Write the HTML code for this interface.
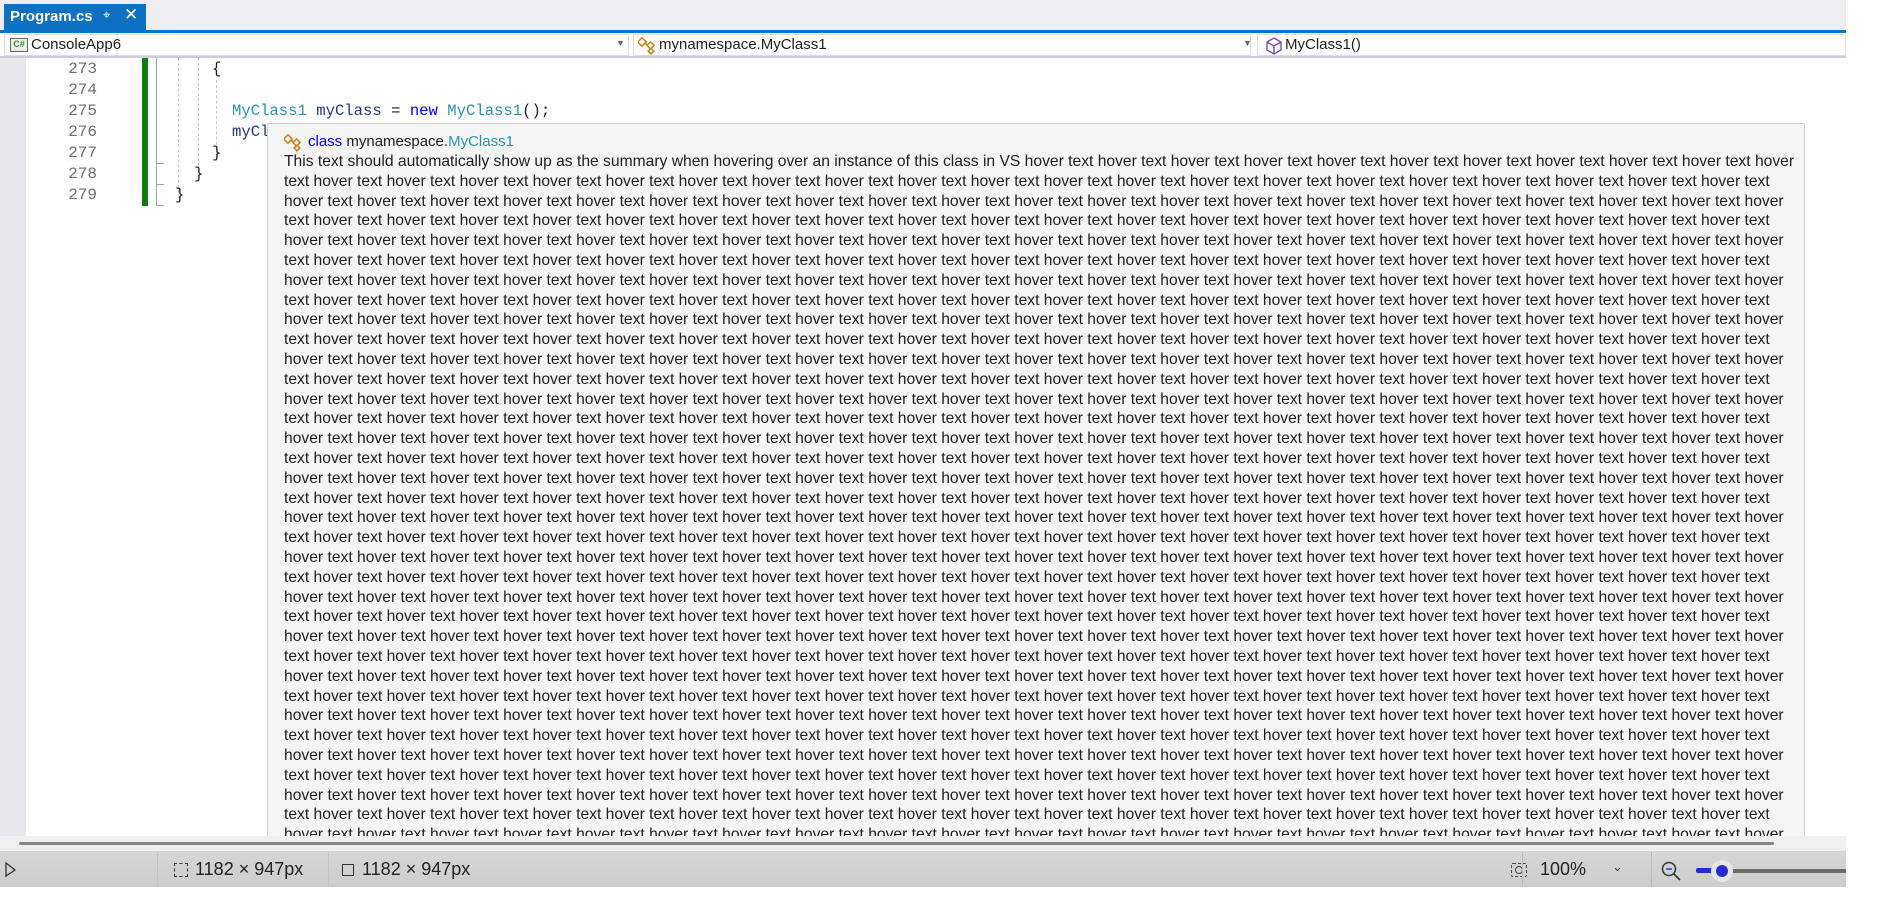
<!DOCTYPE html>
<html><head><meta charset="utf-8"><style>
*{margin:0;padding:0;box-sizing:border-box}
body{width:1878px;height:916px;background:#fff;position:relative;overflow:hidden;font-family:"Liberation Sans",sans-serif}
.abs{position:absolute}
.mono{font-family:"Liberation Mono",monospace;font-size:15.6px;white-space:pre}
.ln{position:absolute;right:1781px;width:60px;text-align:right;color:#6e6e6e;font-family:"Liberation Mono",monospace;font-size:16px}
.tip{position:absolute;left:267px;top:123px;width:1538px;height:715px;background:#f5f5f5;border:1px solid #cfcfd8;border-radius:2px;overflow:hidden}
.tip p{position:absolute;left:16px;top:28px;width:1525px;font-size:15.65px;line-height:19.8px;color:#1e1e1e}
.sb{font-size:18px;color:#222}
.sep{position:absolute;top:852px;width:1px;height:34px;background:#c4c4c4}
</style></head><body>
<div class="abs" style="left:0;top:0;width:1846px;height:31px;background:#eeeef2"></div>
<div class="abs" style="left:4px;top:4px;width:142px;height:27px;background:#0e70c0"></div>
<div class="abs" style="left:10px;top:8px;color:#fff;font-weight:bold;font-size:15px">Program.cs</div>
<div class="abs" style="left:103px;top:7px;color:#fff;font-size:13px">&#x2316;</div>
<div class="abs" style="left:124px;top:5px;color:#fff;font-size:17px">✕</div>
<div class="abs" style="left:0;top:30px;width:1846px;height:3px;background:#0e70c0"></div>
<div class="abs" style="left:0;top:33px;width:1846px;height:25px;background:#fff;border-bottom:2px solid #ccccda"></div>
<div class="abs" style="left:4px;top:34px;width:625px;height:22px;border:1px solid #ddd"></div>
<div class="abs" style="left:633px;top:34px;width:618px;height:22px;border:1px solid #ddd"></div>
<div class="abs" style="left:1257px;top:34px;width:589px;height:22px;border:1px solid #ddd"></div>
<div class="abs" style="left:10px;top:38px;width:18px;height:14px;border:1.5px solid #666;background:#eee;font-size:9px;font-weight:bold;color:#2a9a2a;line-height:11px;text-align:center">C#</div>
<div class="abs" style="left:31px;top:36px;font-size:15px;color:#1e1e1e">ConsoleApp6</div>
<div class="abs" style="left:616px;top:38px;font-size:9px;color:#666">▼</div>
<svg class="abs" style="left:638px;top:37px" width="20" height="18" viewBox="0 0 20 18"><g fill="none" stroke="#c28a1e" stroke-width="1.6"><rect x="1" y="2" width="6" height="6" transform="rotate(45 4 5)"/><rect x="10" y="6" width="5" height="5" transform="rotate(45 12.5 8.5)"/><rect x="11" y="12" width="4" height="4" transform="rotate(45 13 14)"/><path d="M6 6 L10 8"/></g></svg>
<div class="abs" style="left:659px;top:36px;font-size:15px;color:#1e1e1e">mynamespace.MyClass1</div>
<div class="abs" style="left:1243px;top:38px;font-size:9px;color:#666">▼</div>
<svg class="abs" style="left:1265px;top:37px" width="18" height="18" viewBox="0 0 18 18"><g fill="none" stroke="#7b4bb0" stroke-width="1.4"><path d="M9 1 L16 5 L16 13 L9 17 L2 13 L2 5 Z"/><path d="M2 5 L9 9 L16 5 M9 9 L9 17"/></g></svg>
<div class="abs" style="left:1285px;top:36px;font-size:15px;color:#1e1e1e">MyClass1()</div>
<div class="abs" style="left:0;top:58px;width:26px;height:780px;background:#e8e8ec"></div>
<div class="abs" style="left:142px;top:58px;width:6px;height:148px;background:#107c10"></div>
<div class="abs" style="left:156px;top:58px;width:1px;height:148px;background:#a0a0a0"></div>
<div class="abs" style="left:156px;top:163px;width:8px;height:1px;background:#a0a0a0"></div>
<div class="abs" style="left:156px;top:184px;width:8px;height:1px;background:#a0a0a0"></div>
<div class="abs" style="left:156px;top:205px;width:8px;height:1px;background:#a0a0a0"></div>
<div class="abs" style="left:178px;top:58px;height:140px;border-left:1px dashed #c8c8c8"></div>
<div class="abs" style="left:198px;top:58px;height:118px;border-left:1px dashed #c8c8c8"></div>
<div class="abs" style="left:216px;top:80px;height:75px;border-left:1px dashed #c8c8c8"></div>
<div class="ln" style="top:60px">273</div>
<div class="ln" style="top:81px">274</div>
<div class="ln" style="top:102px">275</div>
<div class="ln" style="top:123px">276</div>
<div class="ln" style="top:144px">277</div>
<div class="ln" style="top:165px">278</div>
<div class="ln" style="top:186px">279</div>
<div class="abs mono" style="left:212px;top:60px;color:#1e1e1e">{</div>
<div class="abs mono" style="left:232px;top:102px;color:#1e1e1e"><span style="color:#2b91af">MyClass1</span> <span style="color:#1f377f">myClass</span> = <span style="color:#0000ff">new</span> <span style="color:#2b91af">MyClass1</span>();</div>
<div class="abs mono" style="left:232px;top:123px;color:#1f377f">myCl</div>
<div class="abs mono" style="left:212px;top:144px;color:#1e1e1e">}</div>
<div class="abs mono" style="left:194px;top:165px;color:#1e1e1e">}</div>
<div class="abs mono" style="left:175px;top:186px;color:#1e1e1e">}</div>
<div class="tip">
<svg class="abs" style="left:16px;top:10px" width="20" height="18" viewBox="0 0 20 18"><g fill="none" stroke="#c28a1e" stroke-width="1.6"><rect x="1" y="2" width="6" height="6" transform="rotate(45 4 5)"/><rect x="10" y="6" width="5" height="5" transform="rotate(45 12.5 8.5)"/><rect x="11" y="12" width="4" height="4" transform="rotate(45 13 14)"/><path d="M6 6 L10 8"/></g></svg>
<div class="abs" style="left:40px;top:9px;font-size:15px;color:#1e1e1e"><span style="color:#0000ff">class</span> mynamespace.<span style="color:#2b91af">MyClass1</span></div>
<p id="t">This text should automatically show up as the summary when hovering over an instance of this class in VS HOVERS</p>
</div>
<script>
var s="";for(var i=0;i<760;i++)s+="hover text ";
var p=document.getElementById("t");p.textContent=p.textContent.replace("HOVERS",s);
</script>
<div class="abs" style="left:0;top:836px;width:1846px;height:15px;background:#f0f0f0"></div>
<div class="abs" style="left:19px;top:842px;width:1755px;height:3px;background:#858585;border-radius:2px"></div>
<div class="abs" style="left:0;top:851px;width:1846px;height:36px;background:linear-gradient(#d6d6d6,#cdcdcd)"></div>
<svg class="abs" style="left:5px;top:862px" width="12" height="16" viewBox="0 0 12 16"><path d="M1 1 L1 14 L10 8 Z" fill="none" stroke="#333" stroke-width="1.3"/></svg>
<div class="sep" style="left:157px"></div>
<div class="abs" style="left:174px;top:863px;width:14px;height:14px;border:1.5px dashed #333"></div>
<div class="abs sb" style="left:195px;top:859px">1182 × 947px</div>
<div class="sep" style="left:328px"></div>
<div class="abs" style="left:342px;top:864px;width:12px;height:12px;border:1.5px solid #333"></div>
<div class="abs sb" style="left:362px;top:859px">1182 × 947px</div>
<div class="abs" style="left:1511px;top:863px;width:16px;height:14px;border:1.5px dashed #444;border-radius:2px"></div>
<div class="abs" style="left:1515px;top:866px;width:8px;height:8px;border:1.5px solid #444;border-radius:50%"></div>
<div class="sep" style="left:1522px;background:#bbb"></div>
<div class="abs sb" style="left:1540px;top:859px">100%</div>
<div class="abs" style="left:1612px;top:859px;font-size:13px;color:#444">⌄</div>
<div class="sep" style="left:1651px;background:#bbb"></div>
<svg class="abs" style="left:1660px;top:860px" width="22" height="22" viewBox="0 0 22 22"><circle cx="9" cy="9" r="6.5" fill="none" stroke="#333" stroke-width="1.5"/><path d="M14 14 L20 20" stroke="#333" stroke-width="1.6"/><path d="M6 9 H12" stroke="#2b4fcc" stroke-width="1.6"/></svg>
<div class="abs" style="left:1696px;top:868px;width:18px;height:5px;background:#2a2ad0;border-radius:2px"></div>
<div class="abs" style="left:1728px;top:869px;width:118px;height:4px;background:#6a6a6a"></div>
<div class="abs" style="left:1711px;top:860px;width:22px;height:22px;border-radius:50%;background:#e6e6e6"></div>
<div class="abs" style="left:1716px;top:865px;width:12px;height:12px;border-radius:50%;background:#2a2ad0"></div>
</body></html>
